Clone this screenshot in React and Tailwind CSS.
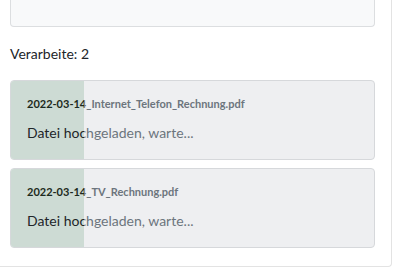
import React from "react";

const files = [
  { name: "2022-03-14_Internet_Telefon_Rechnung.pdf", progress: 73 },
  { name: "2022-03-14_TV_Rechnung.pdf", progress: 73 },
];

function FileRow({ file, dark }) {
  return (
    <div className="pl-[16px] pt-[15px]">
      <div className={`text-[11px] font-bold leading-[16px] whitespace-nowrap ${dark ? "text-[#1c2a20]" : "text-[#6c757d]"}`}>
        {file.name}
      </div>
      <div className={`mt-[11px] text-[14px] leading-[20px] whitespace-nowrap ${dark ? "text-[#212529]" : "text-[#6c757d]"}`}>
        Datei hochgeladen, warte...
      </div>
    </div>
  );
}

function UploadItem({ file }) {
  return (
    <div className="relative h-[80px] rounded border border-[#d6d8db] bg-[#eeeff1] overflow-hidden">
      <FileRow file={file} />
      <div
        className="absolute left-0 top-0 bottom-0 overflow-hidden bg-[#cddbd4]"
        style={{ width: file.progress }}
      >
        <FileRow file={file} dark />
      </div>
    </div>
  );
}

export default function App() {
  return (
    <div className="w-[403px] h-[277px] bg-white overflow-hidden" style={{ fontFamily: 'Lato, "Noto Sans", sans-serif' }}>
      <div className="w-[392px] h-[267px] border-r border-b border-[#e3e3e3] rounded-br pl-[10px] pr-[16px]">
        <div className="h-[27px] bg-[#f8f9fa] border border-t-0 border-[#dcdee0] rounded-b" />
        <div className="mt-[17px] text-[14px] leading-[20px] text-[#212529]">Verarbeite: 2</div>
        <div className="mt-[16px] flex flex-col gap-[8px]">
          {files.map((f) => (
            <UploadItem key={f.name} file={f} />
          ))}
        </div>
      </div>
    </div>
  );
}
